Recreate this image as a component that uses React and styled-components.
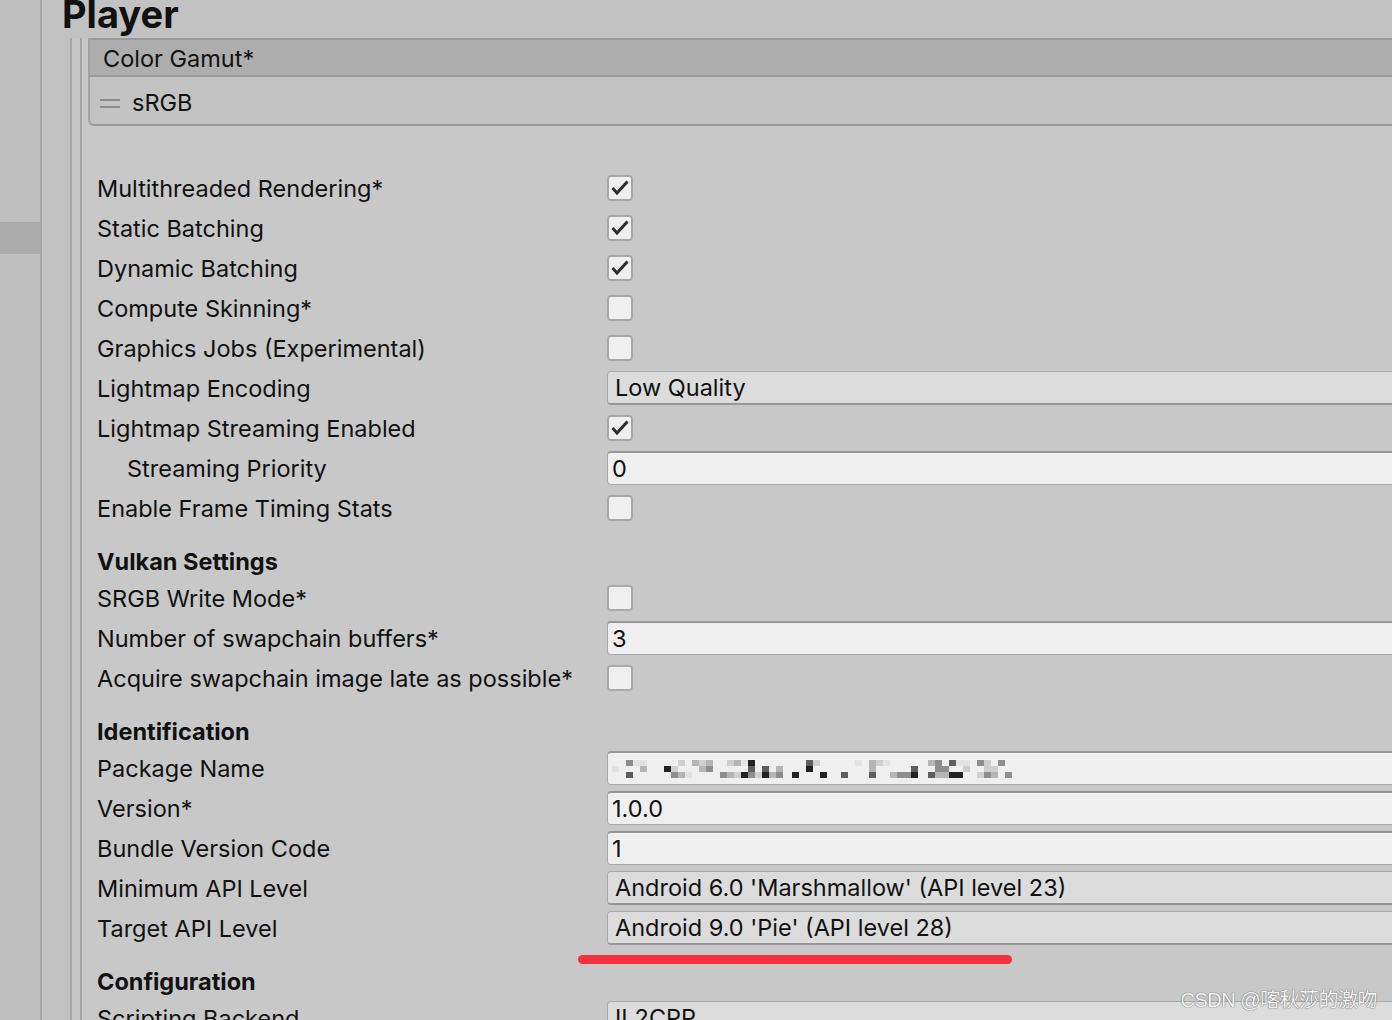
import React from 'react'
import styled, {createGlobalStyle} from 'styled-components'

const GlobalStyle = createGlobalStyle`
  html, body { margin: 0; padding: 0; }
  body { font-family: Inter, "Noto Sans", "Liberation Sans", sans-serif; color: #111; }
  * { box-sizing: border-box; }
`

const Page = styled.div`
  position: relative;
  display: flex;
  width: 1392px;
  height: 1020px;
  overflow: hidden;
  background: #c8c8c8;
`
const LeftDock = styled.div`
  width: 42px;
  flex-shrink: 0;
  background: #bfbfbf;
  border-right: 2px solid #a4a4a4;
  padding-top: 222px;
`
const DockBand = styled.div`
  height: 32px;
  background: #acacac;
`
const Inspector = styled.div`
  flex: 1;
  min-width: 0;
  display: flex;
  flex-direction: column;
`
const TitleBar = styled.div`
  height: 38px;
  flex-shrink: 0;
  background: #c2c2c2;
  padding-left: 20px;
  font-size: 38px;
  font-weight: 700;
  line-height: 28px;
  color: #111;
`
const Body = styled.div`
  flex: 1;
  display: flex;
  min-height: 0;
`
const Gutter = styled.div`
  width: ${p => p.$w}px;
  flex-shrink: 0;
  background: ${p => p.$bg};
  border-right: 2px solid #a6a6a6;
`
const Content = styled.div`
  flex: 1;
  min-width: 0;
  overflow: hidden;
  background: #c8c8c8;
`
const GamutList = styled.div`
  margin-left: 6px;
  margin-bottom: 42px;
`
const GamutHeader = styled.div`
  height: 39px;
  display: flex;
  align-items: center;
  padding-left: 13px;
  padding-top: 2px;
  background: #adadad;
  border-top: 2px solid #9a9a9a;
  border-bottom: 2px solid #9a9a9a;
  border-left: 2px solid #a2a2a2;
  font-size: 23.5px;
`
const GamutItem = styled.div`
  height: 49px;
  display: flex;
  align-items: center;
  gap: 12px;
  padding-left: 10px;
  padding-top: 4px;
  background: #c3c3c3;
  border-left: 2px solid #a4a4a4;
  border-bottom: 2px solid #9a9a9a;
  border-bottom-left-radius: 6px;
  font-size: 23.5px;
`
const Handle = styled.span`
  width: 20px;
  height: 9px;
  margin-top: 2px;
  border-top: 2px solid #8c8c8c;
  border-bottom: 2px solid #8c8c8c;
`
const Settings = styled.div`
  padding-left: 15px;
`
const Row = styled.div`
  position: relative;
  display: grid;
  grid-template-columns: 510px 1fr;
  align-items: center;
  height: 40px;
  font-size: 23.5px;
`
const Label = styled.div`
  padding-left: ${p => (p.$indent ? 30 : 0)}px;
  white-space: nowrap;
`
const SectionTitle = styled.div`
  height: 50px;
  padding-top: 17px;
  line-height: 34px;
  font-size: 23.5px;
  font-weight: 700;
`
const Check = styled.div`
  width: 26px;
  height: 26px;
  border: 2px solid #a9a9a9;
  border-radius: 4px;
  background: #efefef;
  display: flex;
  align-items: center;
  justify-content: center;
`
const Field = styled.div`
  height: 34px;
  margin-right: -30px;
  display: flex;
  align-items: center;
  border-radius: 4px;
  white-space: nowrap;
  overflow: hidden;
  font-size: 23.5px;
  background: ${p => (p.$dropdown ? '#dcdcdc' : '#efefef')};
  border: 1.5px solid #a8a8a8;
  ${p => (p.$dropdown ? 'border-bottom: 2px solid #979797;' : 'border-top: 2px solid #979797;')}
  padding-left: ${p => (p.$dropdown ? 7 : 4)}px;
`
const RedMark = styled.div`
  position: absolute;
  left: 481px;
  top: 47px;
  width: 434px;
  height: 9px;
  border-radius: 5px;
  background: #f7303f;
`
const Watermark = styled.div`
  position: absolute;
  right: 15px;
  bottom: 7px;
  font-family: "Liberation Sans", "Noto Sans CJK SC", sans-serif;
  font-size: 20px;
  letter-spacing: -0.5px;
  color: #f4f4f4;
  text-shadow: 0 0 1px #6a6a6a, 0 0 1px #6a6a6a;
`

const Tick = () => (
  <svg width="22" height="22" viewBox="0 0 22 22">
    <polyline points="3.5,11 8,16 18.5,4.5" fill="none" stroke="#2d2d2d" strokeWidth="3" strokeLinejoin="miter" />
  </svg>
)

// pixelated redaction in the package name field
const blurBlocks = (() => {
  const out = []
  const spans = [[0, 30], [52, 165], [180, 300], [316, 400]]
  const shades = ['#e2e2e2', '#cfcfcf', '#b5b5b5', '#8e8e8e', '#5e5e5e', '#222']
  let seed = 7
  const rnd = () => {
    seed = (seed * 9301 + 49297) % 233280
    return seed / 233280
  }
  spans.forEach(([a, b]) => {
    for (let x = a; x < b; x += 7) {
      for (let r = 0; r < 3; r++) {
        const v = rnd()
        if (r < 2 && v < 0.55) continue
        if (r === 2 && v < 0.25) continue
        out.push({x, y: 4 + r * 6, c: shades[Math.floor(rnd() * shades.length)]})
      }
    }
  })
  return out
})()

const Blurred = () => (
  <svg width="410" height="26" viewBox="0 0 410 26">
    {blurBlocks.map((b, i) => (
      <rect key={i} x={b.x} y={b.y} width="7" height="6" fill={b.c} />
    ))}
  </svg>
)

const CheckRow = ({label, checked, indent}) => (
  <Row>
    <Label $indent={indent}>{label}</Label>
    <Check>{checked && <Tick />}</Check>
  </Row>
)

const FieldRow = ({label, value, dropdown, indent, children}) => (
  <Row>
    <Label $indent={indent}>{label}</Label>
    <Field $dropdown={dropdown}>{value}</Field>
    {children}
  </Row>
)

export default function App() {
  return (
    <>
      <GlobalStyle />
      <Page>
        <LeftDock>
          <DockBand />
        </LeftDock>
        <Inspector>
          <TitleBar>Player</TitleBar>
          <Body>
            <Gutter $w={30} $bg="#c2c2c2" />
            <Gutter $w={10} $bg="#c6c6c6" />
            <Content>
              <GamutList>
                <GamutHeader>Color Gamut*</GamutHeader>
                <GamutItem>
                  <Handle />
                  sRGB
                </GamutItem>
              </GamutList>
              <Settings>
                <CheckRow label="Multithreaded Rendering*" checked />
                <CheckRow label="Static Batching" checked />
                <CheckRow label="Dynamic Batching" checked />
                <CheckRow label="Compute Skinning*" />
                <CheckRow label="Graphics Jobs (Experimental)" />
                <FieldRow label="Lightmap Encoding" value="Low Quality" dropdown />
                <CheckRow label="Lightmap Streaming Enabled" checked />
                <FieldRow label="Streaming Priority" value="0" indent />
                <CheckRow label="Enable Frame Timing Stats" />

                <SectionTitle>Vulkan Settings</SectionTitle>
                <CheckRow label="SRGB Write Mode*" />
                <FieldRow label="Number of swapchain buffers*" value="3" />
                <CheckRow label="Acquire swapchain image late as possible*" />

                <SectionTitle>Identification</SectionTitle>
                <FieldRow label="Package Name" value={<Blurred />} />
                <FieldRow label="Version*" value="1.0.0" />
                <FieldRow label="Bundle Version Code" value="1" />
                <FieldRow label="Minimum API Level" value="Android 6.0 'Marshmallow' (API level 23)" dropdown />
                <FieldRow label="Target API Level" value="Android 9.0 'Pie' (API level 28)" dropdown>
                  <RedMark />
                </FieldRow>

                <SectionTitle>Configuration</SectionTitle>
                <FieldRow label="Scripting Backend" value="IL2CPP" dropdown />
              </Settings>
            </Content>
          </Body>
        </Inspector>
        <Watermark>CSDN @喀秋莎的激吻</Watermark>
      </Page>
    </>
  )
}
